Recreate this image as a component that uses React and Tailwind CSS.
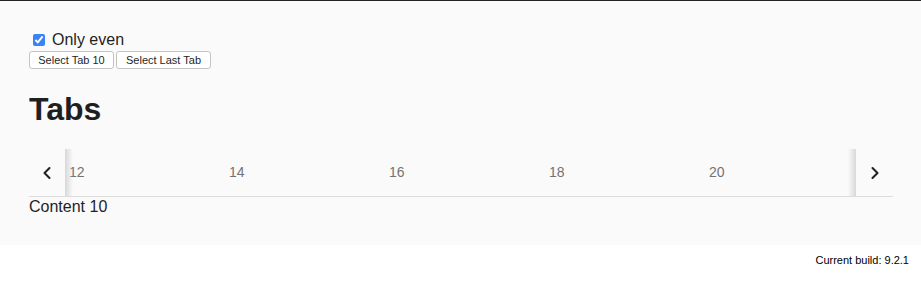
import { ChevronLeft, ChevronRight } from 'lucide-react';

const tabs = [12, 14, 16, 18, 20];

export default function App() {
    return (
        <div className="min-h-screen bg-white font-['Liberation_Sans',Arial,sans-serif] text-[#1f1f1f]">
            <div className="border-t border-[#222] bg-[#fafafa] pl-[29px] pr-[28px] pt-[30px] pb-[29px]">
                <label className="flex items-center h-[18px] text-[16px]">
                    <input type="checkbox" defaultChecked className="ml-[4px] mr-[7px] w-[12px] h-[12px] accent-[#3b82f6]" />
                    Only even
                </label>
                <div className="flex gap-[2px] mt-[2px]">
                    <button className="w-[85px] h-[18px] text-[11px] leading-none bg-white border border-[#c4c4c4] rounded-[3px]">
                        Select Tab 10
                    </button>
                    <button className="w-[95px] h-[18px] text-[11px] leading-none bg-white border border-[#c4c4c4] rounded-[3px]">
                        Select Last Tab
                    </button>
                </div>
                <h1 className="mt-[22px] mb-[22px] text-[32px] font-bold leading-[36px]">Tabs</h1>
                <div className="flex h-[48px] border-b border-[#dcdcdc]">
                    <button className="w-[36px] flex items-center justify-center text-[#222]">
                        <ChevronLeft size={20} strokeWidth={2.5} />
                    </button>
                    <div className="relative flex-1 overflow-hidden">
                        <div className="flex h-full">
                            {tabs.map((t) => (
                                <div key={t} className="w-[160px] shrink-0 flex items-center pl-[4px] text-[14px] font-medium text-[#737373]">
                                    {t}
                                </div>
                            ))}
                        </div>
                        <div className="absolute left-0 top-0 h-full w-[8px] bg-gradient-to-r from-[#d8d8d8] to-transparent" />
                        <div className="absolute right-0 top-0 h-full w-[8px] bg-gradient-to-l from-[#d8d8d8] to-transparent" />
                    </div>
                    <button className="w-[37px] flex items-center justify-center text-[#222]">
                        <ChevronRight size={20} strokeWidth={2.5} />
                    </button>
                </div>
                <div className="text-[16px] leading-[18px] mt-[1px]">Content 10</div>
            </div>
            <div className="flex justify-end pr-[12px] pt-[7px] text-[11px] text-black">
                Current build: 9.2.1
            </div>
        </div>
    );
}
